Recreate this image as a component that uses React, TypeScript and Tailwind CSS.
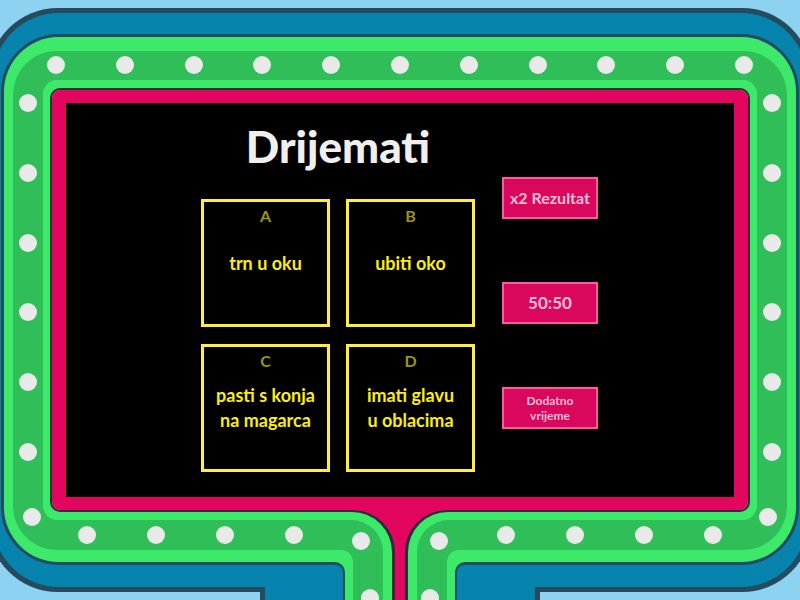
import React from 'react'

const DOTS: [number, number][] = [
  ...Array.from({ length: 11 }, (_, k) => [56 + 68.8 * k, 65] as [number, number]),
  ...Array.from({ length: 6 }, (_, k) => [28, 103 + 69.8 * k] as [number, number]),
  ...Array.from({ length: 6 }, (_, k) => [772, 103 + 69.8 * k] as [number, number]),
  [32, 517],
  [768, 517],
  [87, 535],
  [156, 535],
  [225, 535],
  [294, 535],
  [361, 541],
  [370, 598],
  [713, 535],
  [644, 535],
  [575, 535],
  [506, 535],
  [439, 541],
  [430, 598],
]

const answers = [
  { letter: 'A', text: ['trn u oku'] },
  { letter: 'B', text: ['ubiti oko'] },
  { letter: 'C', text: ['pasti s konja', 'na magarca'] },
  { letter: 'D', text: ['imati glavu', 'u oblacima'] },
]

function AnswerBox({ letter, text }: { letter: string; text: string[] }) {
  return (
    <div className="relative h-[128px] border-[3px] border-[#fdf03a] flex items-center justify-center">
      <span className="absolute top-[6px] left-0 right-0 text-center text-[16px] leading-[16px] font-bold text-[#9c9708]">
        {letter}
      </span>
      <div className="text-center text-[18px] leading-[25px] font-bold text-[#fcee10]">
        {text.map((t) => (
          <div key={t}>{t}</div>
        ))}
      </div>
    </div>
  )
}

function PowerButton({ children, className }: { children: React.ReactNode; className: string }) {
  return (
    <div
      className={`h-[42px] border-2 border-[#ff5c9e] bg-[#d9085d] flex items-center justify-center text-center font-bold text-[#ffbfd9] ${className}`}
    >
      {children}
    </div>
  )
}

export default function App() {
  return (
    <div className="relative w-[800px] h-[600px] overflow-hidden bg-[#8dd2f0] font-['Lato',sans-serif]">
      {/* frame */}
      <div className="mt-[8px] -mx-[12px] h-[584px] rounded-[70px] bg-[#264b5e] p-[5px]">
        <div className="h-full rounded-[66px] bg-[#0784ae] pt-[21px] px-[8px] pb-[22px]">
          <div className="h-full rounded-[58px] border-[3px] border-[#264b5e]">
            <div className="h-full rounded-[55px] bg-[#3ce969] pt-[14px] px-[9px] pb-[12px]">
              <div className="h-full rounded-[44px] bg-[#2fbe57] pt-[29px] px-[30px] pb-[30px]">
                <div className="h-full rounded-[14px] bg-[#3ce969] pt-[8px] px-[7px] pb-[8px]">
                  <div className="h-full rounded-[10px] border-2 border-[#26303a]">
                    <div className="h-full rounded-[8px] bg-[#e3065f] pt-[13px] px-[14px] pb-[13px]">
                      <div className="h-full bg-black flex">
                        <div className="ml-[135px] w-[274px] flex flex-col">
                          <h1 className="mt-[21px] text-center text-[44px] leading-[44px] font-black text-[#efefef]">
                            Drijemati
                          </h1>
                          <div className="mt-[31px] grid grid-cols-2 gap-x-[16px] gap-y-[17px]">
                            {answers.map((a) => (
                              <AnswerBox key={a.letter} letter={a.letter} text={a.text} />
                            ))}
                          </div>
                        </div>
                        <div className="ml-[27px] mt-[74px] w-[96px] flex flex-col gap-[63px]">
                          <PowerButton className="text-[16px]">x2 Rezultat</PowerButton>
                          <PowerButton className="text-[17px]">50:50</PowerButton>
                          <PowerButton className="text-[12px] leading-[15px]">
                            Dodatno
                            <br />
                            vrijeme
                          </PowerButton>
                        </div>
                      </div>
                    </div>
                  </div>
                </div>
              </div>
            </div>
          </div>
        </div>
      </div>

      {/* stem below the board */}
      <div className="absolute left-[340px] top-[505px] w-[120px] bottom-0 bg-[#e3065f]" />

      <div className="absolute left-[265px] top-[510px] w-[130px] bottom-0 bg-[#26303a] pt-[2px] pr-[3px] rounded-tr-[42px]">
        <div className="h-full bg-[#3ce969] pt-[8px] pr-[9px] rounded-tr-[40px]">
          <div className="h-full bg-[#2fbe57] rounded-tr-[32px]" />
        </div>
      </div>
      <div className="absolute left-[265px] top-[550px] w-[88px] bottom-0 bg-[#3ce969] rounded-tr-[12px]" />
      <div className="absolute left-[265px] top-[562px] w-[80px] bottom-0 bg-[#0784ae] border-t-[3px] border-r-2 border-[#264b5e] rounded-tr-[10px]" />
      <div className="absolute left-[260px] top-[588px] w-[5px] bottom-0 bg-[#264b5e]" />

      <div className="absolute left-[405px] top-[510px] w-[130px] bottom-0 bg-[#26303a] pt-[2px] pl-[3px] rounded-tl-[42px]">
        <div className="h-full bg-[#3ce969] pt-[8px] pl-[9px] rounded-tl-[40px]">
          <div className="h-full bg-[#2fbe57] rounded-tl-[32px]" />
        </div>
      </div>
      <div className="absolute left-[447px] top-[550px] w-[88px] bottom-0 bg-[#3ce969] rounded-tl-[12px]" />
      <div className="absolute left-[455px] top-[562px] w-[80px] bottom-0 bg-[#0784ae] border-t-[3px] border-l-2 border-[#264b5e] rounded-tl-[10px]" />
      <div className="absolute left-[535px] top-[588px] w-[5px] bottom-0 bg-[#264b5e]" />

      {/* lights */}
      {DOTS.map(([x, y], i) => (
        <div
          key={i}
          className="absolute w-[18px] h-[18px] rounded-full bg-[#e9e9e9]"
          style={{ left: x - 9, top: y - 9 }}
        />
      ))}
    </div>
  )
}
